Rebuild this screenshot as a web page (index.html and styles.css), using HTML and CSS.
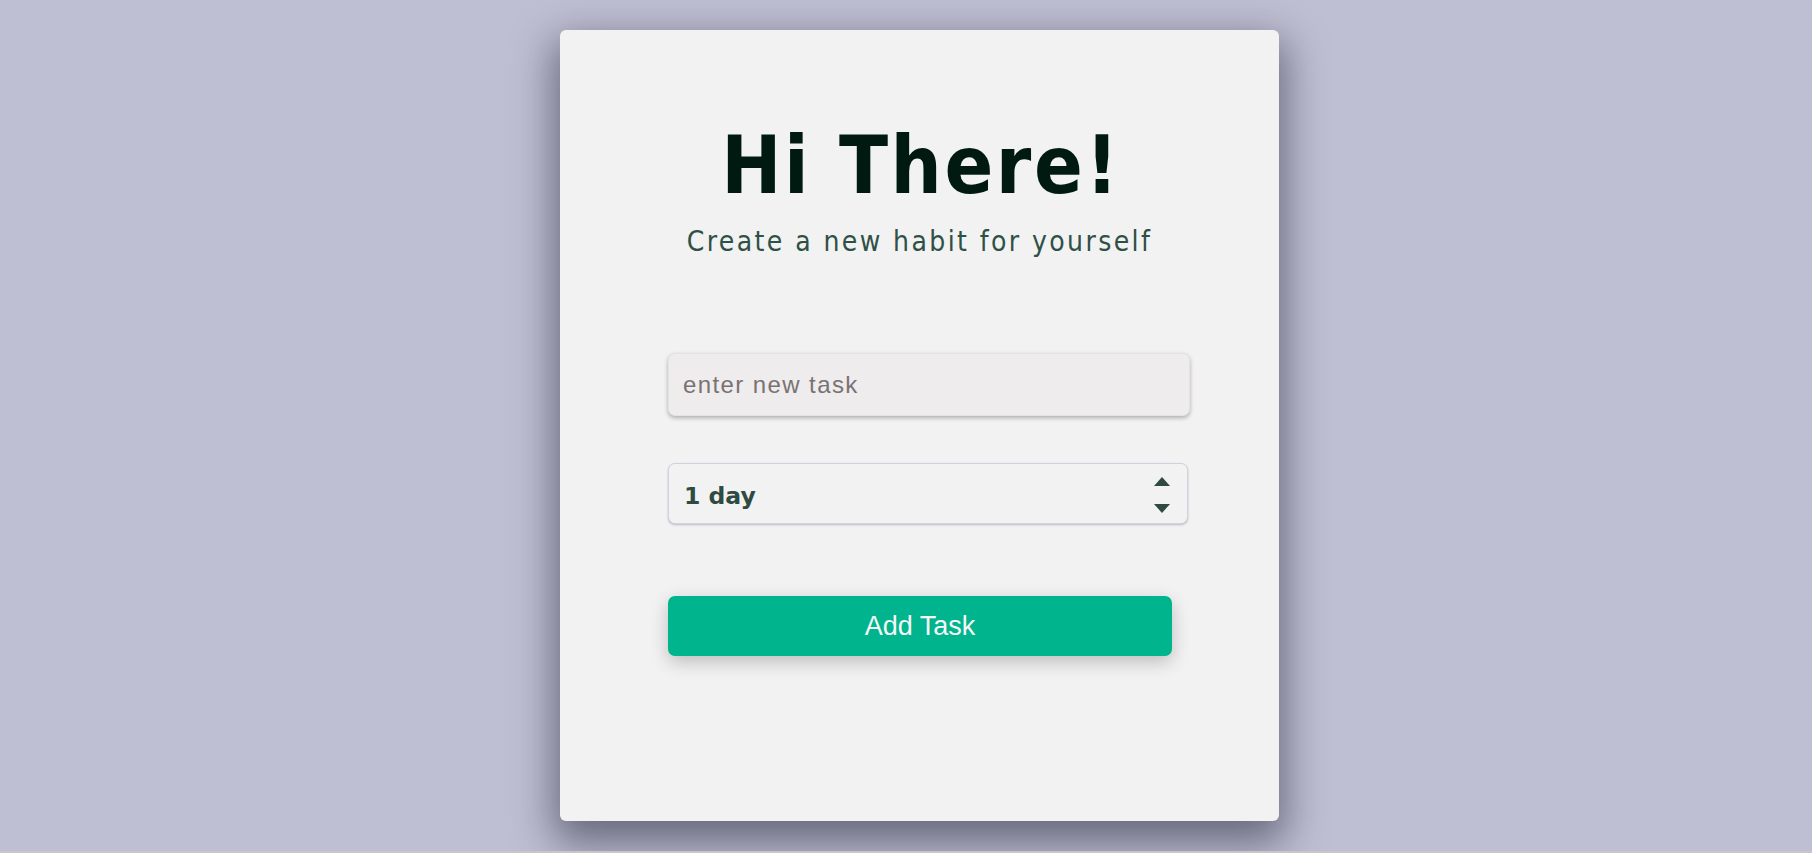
FILE: index.html
```html
<!DOCTYPE html>
<html lang="en">
<head>
<meta charset="utf-8">
<title>Habit Tracker</title>
<link rel="stylesheet" href="styles.css">
</head>
<body>
  <main class="card">
    <h1 class="title">Hi There!</h1>
    <p class="subtitle">Create a new habit for yourself</p>
    <form class="form">
      <input class="task-input" type="text" placeholder="enter new task">
      <div class="select-wrap">
        <select class="days">
          <option>1 day</option>
          <option>2 days</option>
          <option>3 days</option>
          <option>1 week</option>
        </select>
        <svg class="spinner" width="16" height="36" viewBox="0 0 16 36" aria-hidden="true">
          <path d="M8 0 L16 9 L0 9 Z" fill="#2e4a41"/>
          <path d="M0 27 L16 27 L8 36 Z" fill="#2e4a41"/>
        </svg>
      </div>
      <button class="add-btn" type="button">Add Task</button>
    </form>
  </main>
</body>
</html>
```

FILE: styles.css
```css
html {
  background: #cac5c6;
}

body {
  margin: 0;
  height: 851px;
  background: #bfbfd3;
  display: flex;
  justify-content: center;
  align-items: flex-start;
  padding-left: 27px;
  box-sizing: border-box;
  overflow: hidden;
}

.card {
  margin-top: 30px;
  width: 719px;
  height: 791px;
  box-sizing: border-box;
  background: #f2f2f2;
  border-radius: 6px;
  box-shadow: 0 16px 40px 6px rgba(20, 20, 40, 0.5);
  padding: 88px 0 0 108px;
  display: flex;
  flex-direction: column;
  align-items: flex-start;
}

.title {
  margin: 0 0 0 -108px;
  padding-left: 3px;
  align-self: stretch;
  text-align: center;
  font-family: "DejaVu Sans Condensed", "DejaVu Sans", sans-serif;
  font-weight: bold;
  font-size: 80px;
  line-height: 96px;
  letter-spacing: 2.6px;
  color: #001a12;
}

.subtitle {
  margin: 11px 0 0 -108px;
  align-self: stretch;
  text-align: center;
  font-family: "DejaVu Sans Condensed", "DejaVu Sans", sans-serif;
  font-size: 28px;
  line-height: 34px;
  letter-spacing: 2.4px;
  color: #2f5046;
}

.form {
  margin-top: 94px;
  display: flex;
  flex-direction: column;
  align-items: flex-start;
}

.task-input {
  width: 522px;
  height: 63px;
  box-sizing: border-box;
  border: 1px solid #e6e2e3;
  border-radius: 7px;
  background: #eeeced;
  box-shadow: 0 2px 4px rgba(0, 0, 0, 0.28);
  padding: 0 14px;
  font-family: "Liberation Sans", Arial, sans-serif;
  font-size: 24px;
  letter-spacing: 1.4px;
  color: #333;
  outline: none;
}

.task-input::placeholder {
  color: #7a7272;
}

.select-wrap {
  position: relative;
  margin-top: 47px;
}

.days {
  -webkit-appearance: none;
  appearance: none;
  width: 520px;
  height: 61px;
  box-sizing: border-box;
  border: 1px solid #d2d2de;
  border-radius: 7px;
  background: #f2f2f2;
  box-shadow: 0 1px 2px rgba(60, 60, 90, 0.3);
  padding: 5px 15px 0;
  font-family: "DejaVu Sans", Verdana, sans-serif;
  font-weight: bold;
  font-size: 23.5px;
  color: #2e4a41;
  outline: none;
}

.spinner {
  position: absolute;
  right: 18px;
  top: 14px;
  pointer-events: none;
}

.add-btn {
  margin-top: 72px;
  width: 504px;
  height: 60px;
  border: none;
  border-radius: 7px;
  background: #00b48e;
  box-shadow: 0 6px 18px rgba(0, 0, 0, 0.22);
  color: #f6f6f6;
  font-family: "Liberation Sans", Arial, sans-serif;
  font-size: 27px;
  cursor: pointer;
}
```
